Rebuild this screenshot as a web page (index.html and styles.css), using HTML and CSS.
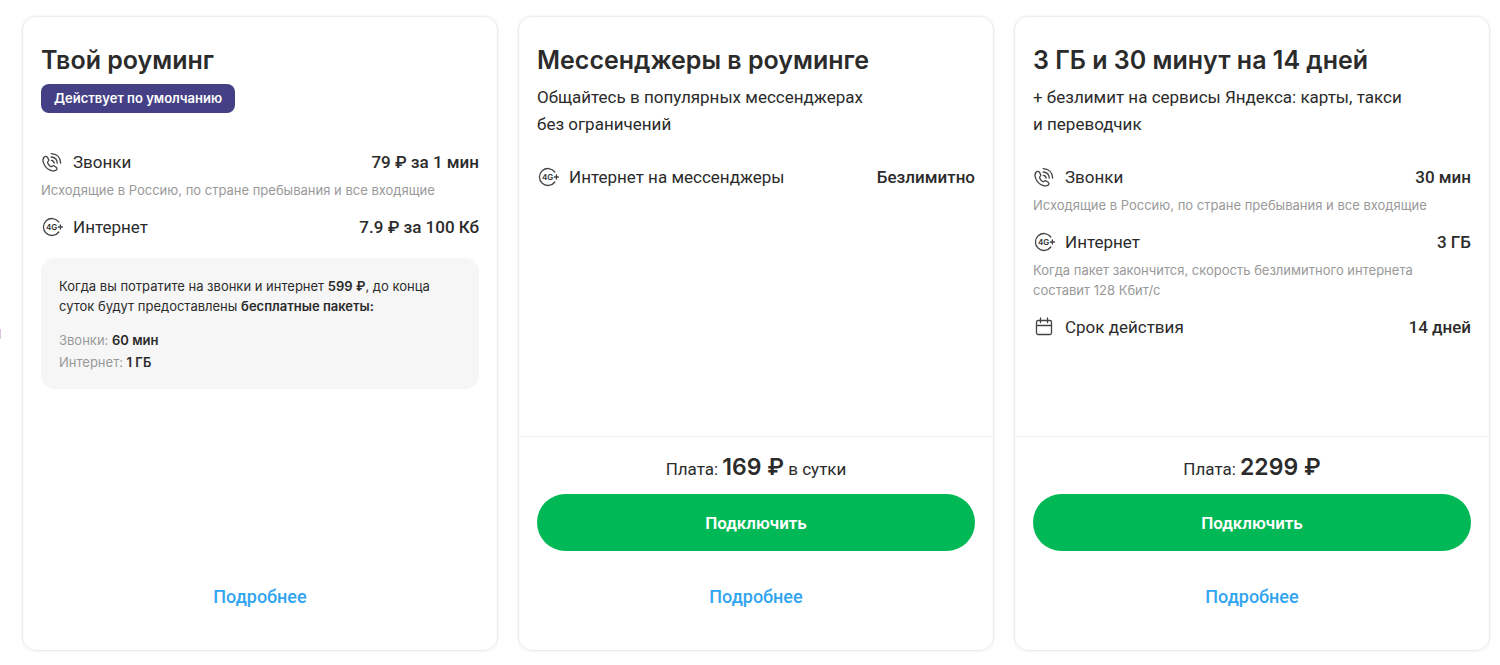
FILE: index.html
```html
<!DOCTYPE html>
<html lang="ru">
<head>
    <meta charset="UTF-8">
    <meta name="viewport" content="width=device-width, initial-scale=1.0">
    <title>Тарифы в роуминге</title>
    <link rel="stylesheet" href="styles.css">
</head>
<body>

    <!-- Иконки -->
    <svg class="sprite" aria-hidden="true">
        <symbol id="icon-call" viewBox="0 0 22 22">
            <path d="M3 6.200c-1.300 1.500-1.300 3.400-.5 5.700 1.200 3.400 3.600 6.200 7.200 7.400 2 .7 4.100.9 5.600-.4.900-.8.900-1.600.1-2.300l-2.100-1.600c-.8-.5-1.500-.4-2.100.2-.6.6-1.300.6-2 .1-1.200-.9-2-1.900-2.500-3.200-.3-.8-.1-1.400.5-1.900.6-.5.7-1.100.4-1.900L6.300 6.100C5.500 5.100 4 5.100 3 6.200z"/>
            <path d="M10.300 9.300c1.700.2 2.700 1.200 2.900 2.900M10.200 6c3.600.2 5.900 2.500 6.100 6.200M10.100 2.600c5.600.2 9.300 3.800 9.600 9.500"/>
        </symbol>
        <symbol id="icon-4g" viewBox="0 0 22 22">
            <path d="M17.800 6A8.500 8.500 0 1 0 17.800 16M21.400 11h-4M19.400 9v4"/>
            <text x="5" y="14">4G</text>
        </symbol>
        <symbol id="icon-calendar" viewBox="0 0 22 22">
            <rect x="3.500" y="4.500" width="15" height="14" rx="1.500"/>
            <path d="M3.500 9.500h15M7.500 2v4.500M14.500 2v4.500"/>
        </symbol>
    </svg>

    <span class="pager-edge"></span>

    <main class="cards">
        <section class="card">
            <div class="card-body">
                <h2>Твой роуминг</h2>
                <span class="badge">Действует по умолчанию</span>
                <div class="options">
                    <div class="option">
                        <div class="row">
                            <svg class="icon"><use href="#icon-call"/></svg>
                            <span class="name">Звонки</span>
                            <strong>79 ₽ за 1 мин</strong>
                        </div>
                        <p class="note">Исходящие в Россию, по стране пребывания и все входящие</p>
                    </div>
                    <div class="option">
                        <div class="row">
                            <svg class="icon"><use href="#icon-4g"/></svg>
                            <span class="name">Интернет</span>
                            <strong>7.9 ₽ за 100 Кб</strong>
                        </div>
                    </div>
                </div>
                <div class="bonus">
                    <p>Когда вы потратите на звонки и интернет <b>599 ₽</b>, до конца суток будут предоставлены <b>бесплатные пакеты:</b></p>
                    <ul>
                        <li>Звонки: <b>60 мин</b></li>
                        <li>Интернет: <b>1 ГБ</b></li>
                    </ul>
                </div>
            </div>
            <div class="more"><a href="#">Подробнее</a></div>
        </section>

        <section class="card">
            <div class="card-body">
                <h2>Мессенджеры в роуминге</h2>
                <p class="subtitle">Общайтесь в популярных мессенджерах<br>без ограничений</p>
                <div class="options">
                    <div class="option">
                        <div class="row">
                            <svg class="icon"><use href="#icon-4g"/></svg>
                            <span class="name">Интернет на мессенджеры</span>
                            <strong>Безлимитно</strong>
                        </div>
                    </div>
                </div>
            </div>
            <div class="payment">
                <p class="price">Плата: <b>169 ₽</b> в сутки</p>
                <button type="button">Подключить</button>
            </div>
            <div class="more"><a href="#">Подробнее</a></div>
        </section>

        <section class="card">
            <div class="card-body">
                <h2>3 ГБ и 30 минут на 14 дней</h2>
                <p class="subtitle">+ безлимит на сервисы Яндекса: карты, такси<br>и переводчик</p>
                <div class="options">
                    <div class="option">
                        <div class="row">
                            <svg class="icon"><use href="#icon-call"/></svg>
                            <span class="name">Звонки</span>
                            <strong>30 мин</strong>
                        </div>
                        <p class="note">Исходящие в Россию, по стране пребывания и все входящие</p>
                    </div>
                    <div class="option">
                        <div class="row">
                            <svg class="icon"><use href="#icon-4g"/></svg>
                            <span class="name">Интернет</span>
                            <strong>3 ГБ</strong>
                        </div>
                        <p class="note">Когда пакет закончится, скорость безлимитного интернета<br>составит 128 Кбит/с</p>
                    </div>
                    <div class="option">
                        <div class="row">
                            <svg class="icon"><use href="#icon-calendar"/></svg>
                            <span class="name">Срок действия</span>
                            <strong>14 дней</strong>
                        </div>
                    </div>
                </div>
            </div>
            <div class="payment">
                <p class="price">Плата: <b>2299 ₽</b></p>
                <button type="button">Подключить</button>
            </div>
            <div class="more"><a href="#">Подробнее</a></div>
        </section>
    </main>

</body>
</html>
```
FILE: styles.css
```css
* {
    box-sizing: border-box;
}

body {
    display: flex;
    min-height: 100vh;
    margin: 0;
    padding: 16px 10px 14px 22px;
    background-color: #fff;
    color: #2b2b2b;
    font-family: Roboto, "Liberation Sans", sans-serif;
    font-size: 17px;
    line-height: 24px;
}

h2, p, ul {
    margin: 0;
    padding: 0;
}

b, strong {
    font-weight: 600;
}

.sprite {
    display: none;
}

/* край кнопки прокрутки слева */
.pager-edge {
    position: absolute;
    left: 0;
    top: 50%;
    width: 1px;
    height: 10px;
    margin-top: -4px;
    background-color: #dcc3e4;
}

.cards {
    flex: 1;
    display: grid;
    grid-template-columns: repeat(3, 1fr);
    gap: 20px;
}

.card {
    display: flex;
    flex-direction: column;
    border: 1px solid #ececec;
    border-radius: 14px;
    box-shadow: 0 0 3px rgba(0, 0, 0, 0.08);
}

.card-body {
    flex: 1;
    padding: 27px 18px 0;
}

h2 {
    margin-bottom: 8px;
    font-family: Inter, Roboto, sans-serif;
    font-size: 25px;
    font-weight: 600;
    line-height: 32px;
}

.badge {
    display: inline-block;
    margin-bottom: 10px;
    padding: 0 13px;
    border-radius: 8px;
    background-color: #454085;
    color: #fff;
    font-family: Inter, sans-serif;
    font-size: 13px;
    font-weight: 600;
    line-height: 29px;
    vertical-align: top;
}

.subtitle {
    line-height: 27px;
}

.options {
    display: grid;
    gap: 15px;
    margin-top: 27px;
}

.row {
    display: flex;
    align-items: center;
}

.row strong {
    font-weight: 500;
}

.icon {
    width: 22px;
    height: 22px;
    margin-right: 10px;
    fill: none;
    stroke: #444;
    stroke-width: 1.3;
    stroke-linecap: round;
    stroke-linejoin: round;
}

#icon-4g text {
    fill: #333;
    stroke: none;
    font-family: Inter, sans-serif;
    font-size: 8px;
    font-weight: 600;
}

.name {
    flex: 1;
}

.note {
    margin-top: 6px;
    color: #999;
    font-family: Inter, sans-serif;
    font-size: 13px;
    line-height: 20px;
}

.bonus {
    margin-top: 19px;
    padding: 18px 18px 16px;
    border-radius: 14px;
    background-color: #f6f6f6;
    font-family: Inter, sans-serif;
    font-size: 13px;
    line-height: 20px;
}

.bonus ul {
    margin-top: 13px;
    color: #999;
    line-height: 22px;
    list-style: none;
}

.bonus li b {
    color: #2b2b2b;
}

.payment {
    padding: 16px 18px 0;
    border-top: 1px solid #f0f0f0;
    text-align: center;
}

.price {
    margin-bottom: 9px;
    line-height: 32px;
}

.price b {
    font-family: Inter, sans-serif;
    font-size: 23px;
    line-height: 24px;
}

button {
    display: block;
    width: 100%;
    height: 57px;
    border: none;
    border-radius: 29px;
    background-color: #00b956;
    color: #fff;
    font-family: inherit;
    font-size: 17px;
    font-weight: 600;
}

button:hover {
    background-color: #00a64d;
}

.more {
    padding: 34px 18px 41px;
    text-align: center;
}

.more a {
    color: #32a5f0;
    font-size: 18px;
    font-weight: 500;
    line-height: 24px;
    text-decoration: none;
}
```
